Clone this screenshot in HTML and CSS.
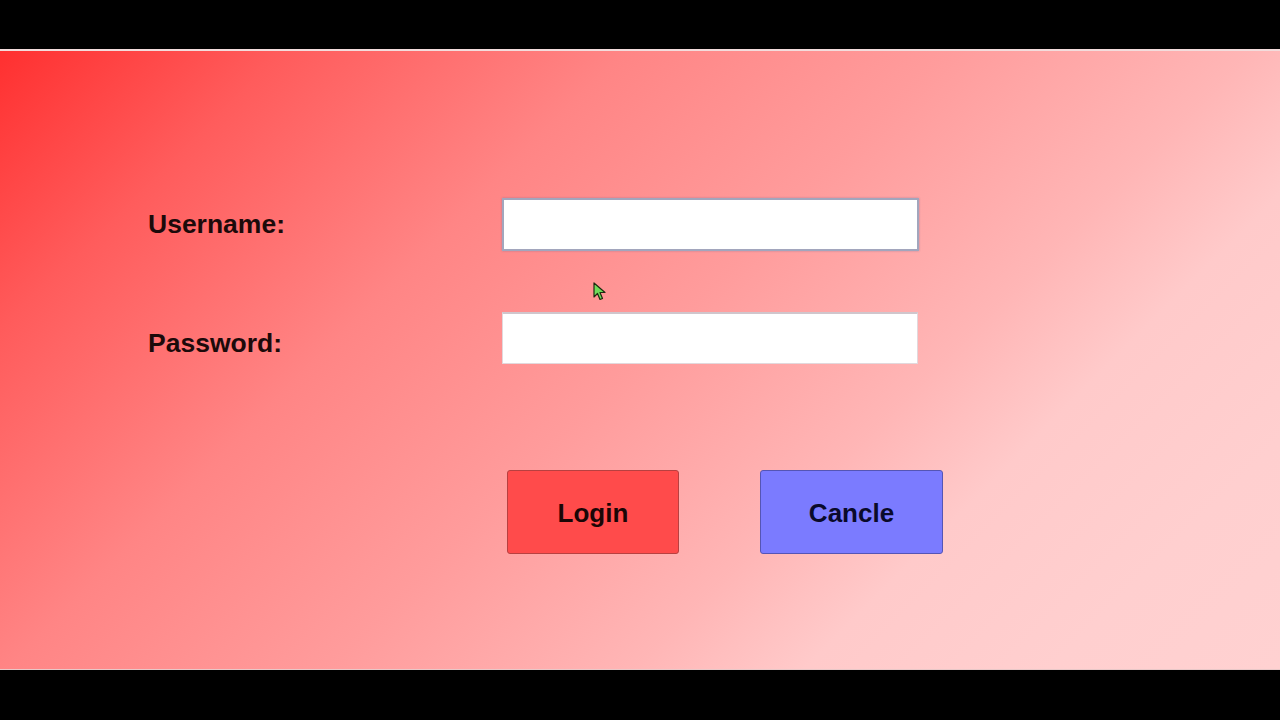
FILE: index.html
```html
<!DOCTYPE html>
<html>
<head>
<meta charset="utf-8">
<link rel="stylesheet" href="styles.css">
</head>
<body>
<div class="bar top"></div>
<div class="stage">
  <div class="row first">
    <label class="label">Username:</label>
    <div class="input user"></div>
  </div>
  <div class="row second">
    <label class="label lower">Password:</label>
    <div class="input pass"></div>
  </div>
  <div class="buttons">
    <div class="btn login">Login</div>
    <div class="btn cancel">Cancle</div>
  </div>
  <svg class="cursor" width="14" height="20" viewBox="0 0 14 20">
    <path d="M1 1 L1 15 L4.5 11.5 L7 17.5 L9.5 16.5 L7 10.5 L12 10.5 Z" fill="#6fdc5a" stroke="#1e2a10" stroke-width="1.2" stroke-linejoin="round"/>
  </svg>
</div>
<div class="bar bottom"></div>
</body>
</html>
```
FILE: styles.css
```css
html, body {
  margin: 0;
  padding: 0;
  background: #000;
  width: 1280px;
  height: 720px;
  overflow: hidden;
  font-family: "Liberation Sans", Arial, sans-serif;
}
.bar.top {
  height: 49px;
  background: #000;
  border-bottom: 2px solid #f3dcdc;
}
.bar.bottom {
  height: 49px;
  background: #000;
  border-top: 1px solid #e8c8c8;
}
.stage {
  position: relative;
  height: 618px;
  box-sizing: border-box;
  padding: 147px 0 0 148px;
  background: linear-gradient(135deg, #ff3030 0%, #ff5c5c 15%, #ff8585 33%, #ff9c9c 50%, #ffb6b6 66%, #ffcaca 75%, #ffcfcf 88%, #ffd1d1 100%);
}
.row {
  display: flex;
  align-items: center;
}
.row.second {
  margin-top: 61px;
}
.label {
  width: 354px;
  font-size: 26.5px;
  font-weight: bold;
  color: #1c0a0a;
}
.label.lower {
  padding-top: 10px;
}
.input {
  width: 417px;
  height: 53px;
  box-sizing: border-box;
  background: #fff;
}
.input.user {
  border: 2px solid #a2a6bd;
  box-shadow: 0 0 2px rgba(90, 90, 140, 0.4);
}
.input.pass {
  width: 416px;
  height: 52px;
  border: 1px solid #e2d8dc;
  border-top: 2px solid #d0c6cc;
}
.buttons {
  display: flex;
  gap: 81px;
  margin: 106px 0 0 359px;
}
.btn {
  height: 84px;
  box-sizing: border-box;
  display: flex;
  align-items: center;
  justify-content: center;
  border-radius: 3px;
  font-size: 26px;
  font-weight: bold;
  color: #1a0606;
  padding-top: 2px;
}
.btn.login {
  width: 172px;
  background: #ff4b4b;
  border: 1px solid #b84040;
}
.btn.cancel {
  width: 183px;
  background: #7b7bff;
  border: 1px solid #5555b5;
  color: #0a0a2a;
}
.cursor {
  position: absolute;
  left: 593px;
  top: 231px;
}
```
